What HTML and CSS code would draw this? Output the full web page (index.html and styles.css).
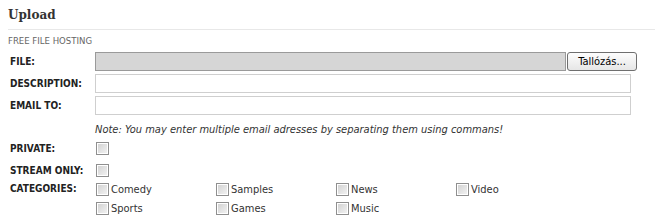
FILE: index.html
```html
<!DOCTYPE html>
<html lang="en">
<head>
  <meta charset="UTF-8" />
  <title>Upload</title>
  <link rel="stylesheet" href="styles.css">
</head>
<body>
  <h2 class="title">Upload</h2>
  <div class="subtitle">FREE FILE HOSTING</div>

  <form class="upload">
    <div class="row">
      <label class="lbl">FILE:</label>
      <div class="file">
        <span class="file-path"></span>
        <button type="button" class="browse">Tallózás...</button>
      </div>
    </div>
    <div class="row">
      <label class="lbl">DESCRIPTION:</label>
      <input type="text" class="text">
    </div>
    <div class="row">
      <label class="lbl">EMAIL TO:</label>
      <input type="text" class="text">
    </div>
    <div class="note">Note: You may enter multiple email adresses by separating them using commans!</div>
    <div class="row check-row">
      <label class="lbl">PRIVATE:</label>
      <input type="checkbox" class="cb">
    </div>
    <div class="row check-row last">
      <label class="lbl">STREAM ONLY:</label>
      <input type="checkbox" class="cb">
    </div>
    <div class="row cats-row">
      <label class="lbl">CATEGORIES:</label>
      <div class="cats">
        <label class="cat"><input type="checkbox" class="cb">Comedy</label>
        <label class="cat"><input type="checkbox" class="cb">Samples</label>
        <label class="cat"><input type="checkbox" class="cb">News</label>
        <label class="cat"><input type="checkbox" class="cb">Video</label>
        <label class="cat"><input type="checkbox" class="cb">Sports</label>
        <label class="cat"><input type="checkbox" class="cb">Games</label>
        <label class="cat"><input type="checkbox" class="cb">Music</label>
      </div>
    </div>
  </form>
</body>
</html>
```

FILE: styles.css
```css
:root {
  --text: #222;
  --muted: #666;
  --field-border: #cfcfcf;
  --tahoma: "DejaVu Sans Condensed", "DejaVu Sans", sans-serif;
}

body {
  margin: 0;
  padding: 7px 3px 0 8px;
  background: #fff;
  color: var(--text);
  font-family: var(--tahoma);
  font-size: 11px;
}

.title {
  margin: 0;
  padding-bottom: 6px;
  font-family: "DejaVu Serif", serif;
  font-size: 12px;
  line-height: 16px;
  font-weight: bold;
  color: #333;
  border-bottom: 1px solid #e8e8e8;
}

.subtitle {
  margin-top: 5px;
  font-size: 9.5px;
  line-height: 12px;
  color: #666;
}

.upload {
  margin-top: 5px;
  width: 623px;
}

.row {
  display: flex;
  align-items: center;
  height: 19px;
  margin-bottom: 3px;
}

.lbl {
  width: 85px;
  padding-left: 2px;
  flex: none;
  font-weight: bold;
  font-size: 10px;
  color: #222;
}

.file {
  display: flex;
  flex: 1;
  height: 19px;
  margin-right: -6px;
}

.file-path {
  flex: 1;
  background: #d6d6d6;
  border: 1px solid #9a9a9a;
}

.browse {
  width: 70px;
  height: 19px;
  margin-left: 1px;
  padding: 0;
  border: 1px solid #6f6f6f;
  border-radius: 3px;
  background: linear-gradient(#fdfdfd, #e6e6e6);
  font-family: var(--tahoma);
  font-size: 11px;
  color: #000;
}

.text {
  flex: 1;
  height: 19px;
  box-sizing: border-box;
  margin: 0;
  border: 1px solid var(--field-border);
  background: #fff;
}

.note {
  margin: 8px 0 4px 87px;
  height: 14px;
  font-style: italic;
  font-size: 11px;
  color: #333;
}

.check-row {
  height: 15px;
  margin-bottom: 7px;
}

.check-row.last {
  margin-bottom: 5px;
}

.cb {
  appearance: none;
  width: 13px;
  height: 13px;
  margin: 0 1px 0 1px;
  box-sizing: border-box;
  border: 1px solid #8f8f8f;
  background: linear-gradient(135deg, #d0d0d0, #f4f4f4);
  box-shadow: inset 0 0 0 1px #fff;
  flex: none;
}

.cats-row {
  align-items: flex-start;
  height: auto;
}

.cats {
  display: grid;
  grid-template-columns: repeat(4, 120px);
  row-gap: 6px;
}

.cat {
  display: flex;
  align-items: center;
  gap: 1px;
  height: 13px;
  color: #333;
}
```
